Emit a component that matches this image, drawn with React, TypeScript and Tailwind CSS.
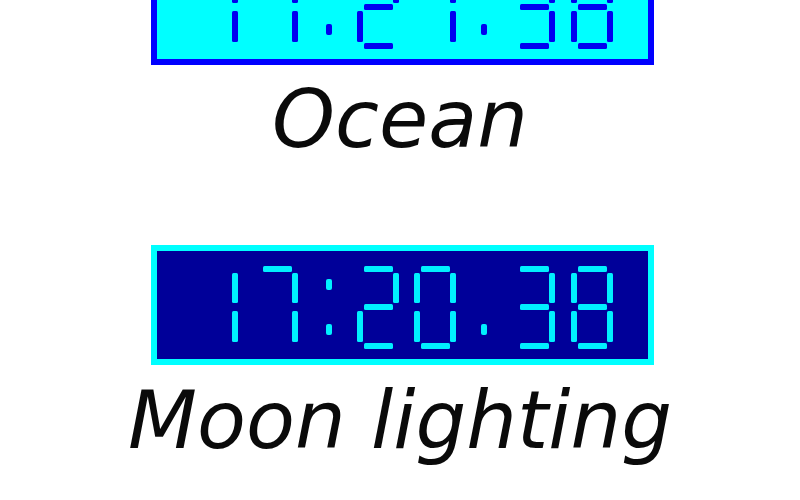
import React from "react";

const SEGS: Record<string, string> = {
  "0": "abcdef",
  "1": "bc",
  "2": "abdeg",
  "3": "abcdg",
  "4": "bcfg",
  "5": "acdfg",
  "6": "acdefg",
  "7": "abc",
  "8": "abcdefg",
  "9": "abcdfg",
};

function Digit({ ch, x, y, color }: { ch: string; x: number; y: number; color: string }) {
  const on = SEGS[ch] || "";
  const W = 44;
  const rects: Record<string, [number, number, number, number]> = {
    a: [8, 1, 29, 6],
    g: [8, 39, 29, 6],
    d: [8, 78, 29, 6],
    f: [1, 8, 6, 30],
    b: [W - 7, 8, 6, 30],
    e: [1, 46, 6, 31],
    c: [W - 7, 46, 6, 31],
  };
  return (
    <g transform={`translate(${x} ${y})`}>
      {on.split("").map((s) => {
        const [rx, ry, w, h] = rects[s];
        return <rect key={s} x={rx} y={ry} width={w} height={h} rx={1.5} fill={color} />;
      })}
    </g>
  );
}

function Face({ time, color }: { time: string; color: string }) {
  const d = time.replace(/[^0-9]/g, "");
  const cells = [38, 98, 199, 256, 355, 413];
  const top = 14;
  return (
    <svg width="491" height="108" viewBox="0 0 491 108" className="block">
      {d.split("").map((c, i) => (
        <Digit key={i} ch={c} x={cells[i]} y={top} color={color} />
      ))}
      <rect x={169} y={top + 14} width={6} height={11} rx={2} fill={color} />
      <rect x={169} y={top + 59} width={6} height={11} rx={2} fill={color} />
      <rect x={324} y={top + 59} width={6} height={11} rx={2} fill={color} />
    </svg>
  );
}

export default function App() {
  return (
    <div className="w-[800px] h-[500px] overflow-hidden bg-white flex flex-col items-center [filter:blur(0.6px)]">
      <div className="-mt-[55px] ml-[5px] w-[503px] h-[120px] border-[6px] border-[#0000ff] bg-[#00ffff]">
        <Face time="17:21.38" color="#0000f0" />
      </div>
      <div
        className="mt-[10px] h-[90px] leading-[90px] text-[80px] italic text-[#0a0a0a]"
        style={{ fontFamily: '"DejaVu Sans", Verdana, sans-serif' }}
      >
        Ocean
      </div>
      <div className="mt-[80px] ml-[5px] w-[503px] h-[120px] border-[6px] border-[#00ffff] bg-[#000099]">
        <Face time="17:20.38" color="#00f0ff" />
      </div>
      <div
        className="mt-[11px] h-[90px] leading-[90px] text-[80px] italic text-[#0a0a0a] whitespace-nowrap"
        style={{ fontFamily: '"DejaVu Sans", Verdana, sans-serif' }}
      >
        Moon lighting
      </div>
    </div>
  );
}
